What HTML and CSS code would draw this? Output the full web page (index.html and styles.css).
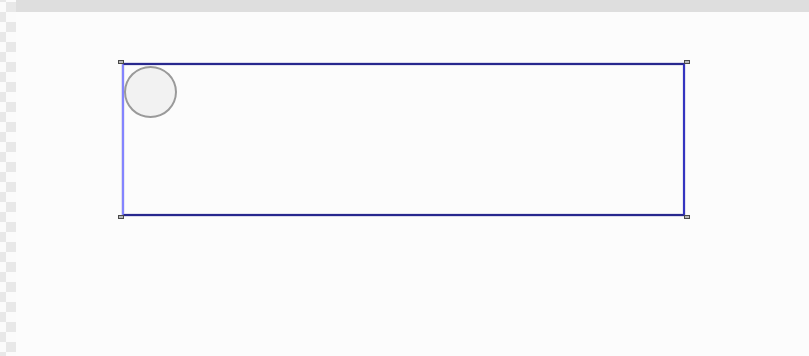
FILE: index.html
```html
<!DOCTYPE html>
<html>
<head>
<meta charset="utf-8">
<link rel="stylesheet" href="styles.css">
</head>
<body>
<div class="app">
  <div class="checker"></div>
  <div class="main">
    <div class="topbar"></div>
    <div class="canvas">
      <div class="frame"></div>
      <div class="handle h-tl"></div>
      <div class="handle h-tr"></div>
      <div class="handle h-bl"></div>
      <div class="handle h-br"></div>
      <div class="knob"></div>
    </div>
  </div>
</div>
</body>
</html>
```
FILE: styles.css
```css
html, body {
  margin: 0;
  padding: 0;
  width: 809px;
  height: 356px;
  overflow: hidden;
  background: #fcfcfc;
  font-family: "Liberation Sans", Arial, sans-serif;
}
.app {
  display: flex;
  width: 809px;
  height: 356px;
}
.checker {
  width: 16px;
  flex: none;
  background-image: conic-gradient(#e8e8e8 25%, #fbfbfb 0 50%, #e8e8e8 0 75%, #fbfbfb 0);
  background-size: 20px 20px;
  background-position: -4px 2px;
}
.main {
  flex: 1;
  display: flex;
  flex-direction: column;
}
.topbar {
  height: 12px;
  background: #dedede;
  flex: none;
}
.canvas {
  position: relative;
  flex: 1;
  background: #fcfcfc;
}
.frame {
  position: absolute;
  left: 106px;
  top: 51px;
  width: 559px;
  height: 149px;
  border-top: 2px solid #28288e;
  border-bottom: 2px solid #28288e;
  border-right: 2px solid #3434c0;
  border-left: 2px solid #8484ff;
  box-shadow: 0 0 0.6px 0.4px rgba(60, 60, 160, 0.35), inset 0 0 0.6px 0.4px rgba(60, 60, 160, 0.25);
}
.handle {
  position: absolute;
  width: 4px;
  height: 2px;
  background: #b8b8b8;
  border: 1px solid #4a4a4a;
}
.h-tl { left: 102px; top: 48px; }
.h-tr { left: 668px; top: 48px; }
.h-bl { left: 102px; top: 203px; }
.h-br { left: 668px; top: 203px; }
.knob {
  position: absolute;
  left: 108px;
  top: 54px;
  width: 49px;
  height: 48px;
  border: 2px solid #9a9a9a;
  border-radius: 50%;
  background: #f2f2f2;
}
```
